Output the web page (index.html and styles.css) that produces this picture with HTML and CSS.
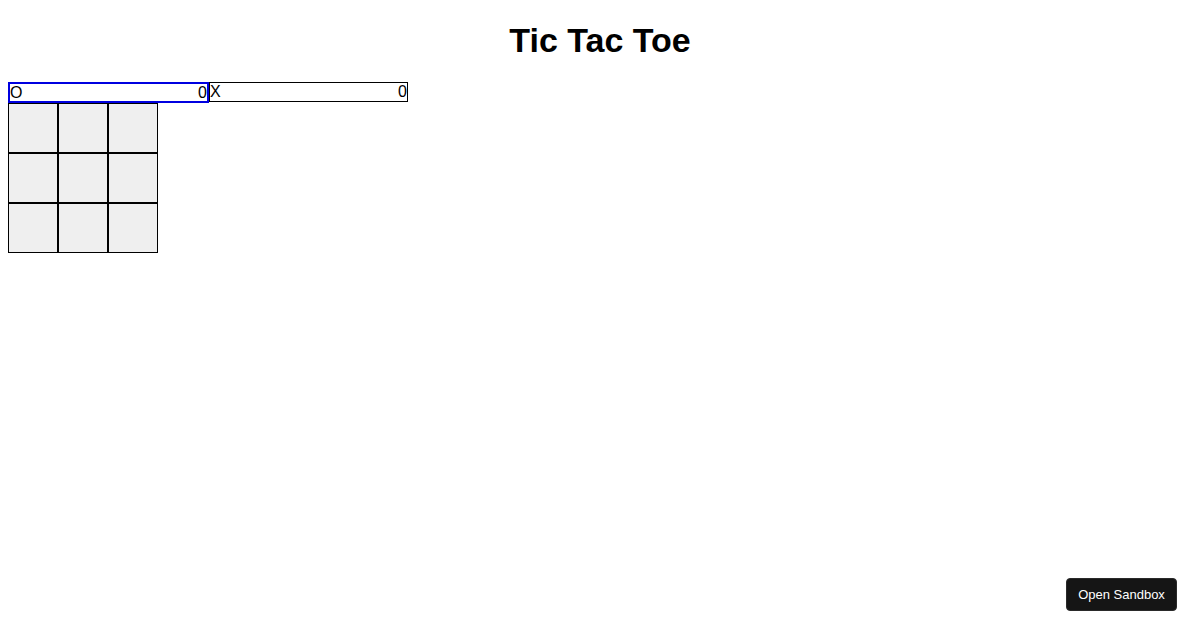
FILE: index.html
```html
<!DOCTYPE html>
<html>
<head>
<meta charset="utf-8">
<title>Tic Tac Toe</title>
<link rel="stylesheet" href="styles.css">
</head>
<body>
<h1 class="title">Tic Tac Toe</h1>
<div class="scores">
  <div class="score score-active"><span>O</span><span>0</span></div>
  <div class="score"><span>X</span><span>0</span></div>
</div>
<div class="board">
  <button class="cell"></button><button class="cell"></button><button class="cell"></button>
  <button class="cell"></button><button class="cell"></button><button class="cell"></button>
  <button class="cell"></button><button class="cell"></button><button class="cell"></button>
</div>
<button class="sandbox">Open Sandbox</button>
</body>
</html>
```
FILE: styles.css
```css
html, body {
  background: #fff;
}
body {
  margin: 8px;
  font-family: "Liberation Sans", Arial, sans-serif;
  color: #000;
}
.title {
  text-align: center;
  font-size: 34px;
  font-weight: bold;
  margin: 13px 0 22px;
  line-height: 39px;
}
.scores {
  display: flex;
  align-items: flex-start;
}
.score {
  box-sizing: border-box;
  display: flex;
  justify-content: space-between;
  align-items: center;
  width: 199px;
  height: 20px;
  border: 1px solid #000;
  font-size: 16px;
  line-height: 18px;
  padding: 0;
}
.score-active {
  width: 201px;
  height: 21px;
  border: 2px solid #0000e0;
  padding: 0;
}
.board {
  display: grid;
  grid-template-columns: repeat(3, 50px);
  grid-template-rows: repeat(3, 50px);
  width: 150px;
}
.cell {
  box-sizing: border-box;
  width: 50px;
  height: 50px;
  margin: 0;
  padding: 0;
  border: 1px solid #000;
  background: #efefef;
  border-radius: 0;
}
.sandbox {
  position: fixed;
  right: 23px;
  bottom: 19px;
  width: 111px;
  height: 33px;
  background: #151515;
  color: #fff;
  border: 1px solid #2a2a2a;
  border-radius: 4px;
  font-family: "Liberation Sans", Arial, sans-serif;
  font-size: 13px;
  padding: 0;
}
```
